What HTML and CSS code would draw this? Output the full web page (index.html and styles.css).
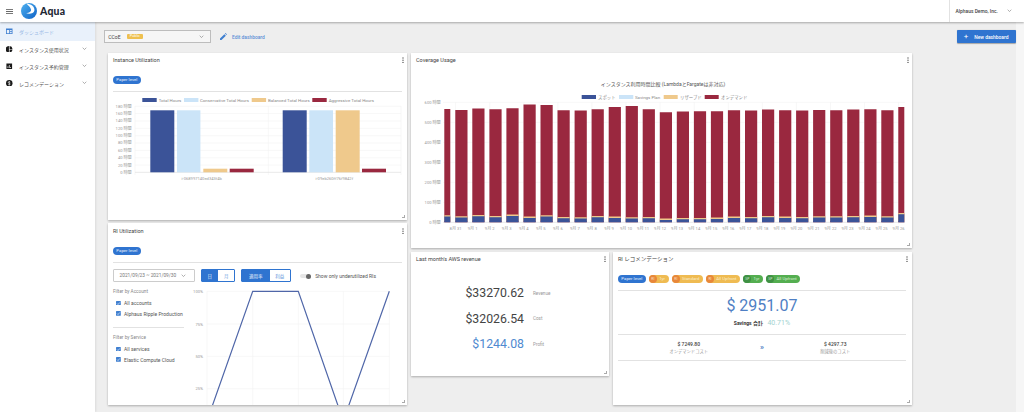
FILE: index.html
```html
<!DOCTYPE html>
<html lang="ja">
<head>
<meta charset="utf-8">
<title>Aqua dashboard</title>
<link rel="stylesheet" href="styles.css">
</head>
<body>
<div class="app">
  <header class="topbar">
    <svg class="burger" viewBox="0 0 7 5"><path d="M0 .4h7M0 2.5h7M0 4.6h7"/></svg>
    <svg class="logo" viewBox="0 0 16 16">
      <defs><linearGradient id="lg" x1="0" y1="0" x2="1" y2="1"><stop offset="0" stop-color="#4fb2f0"/><stop offset="1" stop-color="#0f62c6"/></linearGradient></defs>
      <circle cx="8" cy="8" r="8" fill="url(#lg)"/>
      <path d="M5.5 .6C9.5 1 14 3.5 13.4 7.5 12.9 10.6 8.600 11.200 5.200 10.300 8 9.800 10.500 8.700 10 6.500 9.500 4.200 7 2.500 5.500.6z" fill="#fff"/>
    </svg>
    <span class="brand">Aqua</span>
    <div class="account">
      <span>Alphaus Demo, Inc.</span>
      <svg class="chev" viewBox="0 0 6 4"><path d="M.8.8 3 3 5.200.8"/></svg>
    </div>
  </header>

  <nav class="sidebar">
    <a class="nav-item active">
      <svg class="nav-icon" viewBox="0 0 8 8"><path class="ic-blue" d="M0 .5h8v7H0zM1 2.500v4h3v-4zM5 2.500v1.500h2V2.500zM5 5v1.500h2V5z" fill-rule="evenodd"/></svg>
      <span>ダッシュボード</span>
    </a>
    <a class="nav-item">
      <svg class="nav-icon" viewBox="0 0 8 8"><path class="ic-dark" d="M3.600 0v8A4 4 0 0 1 3.600 0zM4.400 0A4 4 0 0 1 8 3.600H4.400zM4.400 4.400H8A4 4 0 0 1 4.400 8z"/></svg>
      <span>インスタンス使用状況</span>
      <svg class="chev" viewBox="0 0 6 4"><path d="M.8.8 3 3 5.200.8"/></svg>
    </a>
    <a class="nav-item">
      <svg class="nav-icon" viewBox="0 0 8 8"><path class="ic-dark" fill-rule="evenodd" d="M.5.5h7v7h-7zM2 4v2h.8V4zM3.600 2.500V6h.8V2.500zM5.200 5v1H6V5z"/></svg>
      <span>インスタンス予約管理</span>
      <svg class="chev" viewBox="0 0 6 4"><path d="M.8.8 3 3 5.200.8"/></svg>
    </a>
    <a class="nav-item">
      <svg class="nav-icon" viewBox="0 0 8 8"><circle class="ic-dark" cx="4" cy="4" r="4"/><path class="ic-line" d="M5.300 2.700C5 1.900 2.800 1.800 2.800 3c0 1.300 2.500.7 2.500 2 0 1.200-2.300 1.100-2.600.3M4 1.300v5.400"/></svg>
      <span>レコメンデーション</span>
      <svg class="chev" viewBox="0 0 6 4"><path d="M.8.8 3 3 5.200.8"/></svg>
    </a>
  </nav>

  <main class="main">
    <div class="toolbar">
      <div class="picker">
        <span>CCoE</span>
        <span class="tag">Public</span>
        <svg class="chev" viewBox="0 0 6 4"><path d="M.8.8 3 3 5.200.8"/></svg>
      </div>
      <svg class="pencil" viewBox="0 0 8 8"><path d="M0 8V6.300L5 1.300 6.700 3 1.700 8zM5.600.7 6.300 0 8 1.700 7.300 2.400z"/></svg>
      <a class="edit-link">Edit dashboard</a>
      <button class="new-btn"><span class="plus">+</span><span>New dashboard</span></button>
    </div>

    <div class="board">
      <div class="col-left">
        <section class="card card-iu">
          <div class="card-head"><h2>Instance Utilization</h2><svg class="kebab" viewBox="0 0 2 7"><circle cx="1" cy="1" r=".8"/><circle cx="1" cy="3.500" r=".8"/><circle cx="1" cy="6" r=".8"/></svg></div>
          <div class="chips"><span class="chip">Paper level</span></div>
          <hr class="rule">
          <svg class="iu-chart" viewBox="113 92 290 128">
            <g class="grid">
              <path d="M135 106.200H401M135 113.600H401M135 121H401M135 128.300H401M135 135.700H401M135 143H401M135 150.400H401M135 157.800H401M135 165.100H401M135 106V175M268.300 106V175M401 106V175"/>
            </g>
            <path class="axis" d="M135 172.300H401"/>
            <g class="c-blue"><rect x="142.300" y="98" width="14.400" height="4"/><rect x="150.300" y="110.300" width="24" height="62"/><rect x="282.700" y="110.300" width="24" height="62"/></g>
            <g class="c-sky"><rect x="184" y="98" width="14.400" height="4"/><rect x="177" y="110.300" width="23.400" height="62"/><rect x="309.300" y="110.300" width="23.700" height="62"/></g>
            <g class="c-tan"><rect x="251.700" y="98" width="14.400" height="4"/><rect x="203.300" y="168.700" width="24" height="3.600"/><rect x="335.700" y="110.300" width="24" height="62"/></g>
            <g class="c-red"><rect x="312.300" y="98" width="14.400" height="4"/><rect x="229.700" y="168.700" width="24" height="3.600"/><rect x="362" y="168.700" width="24" height="3.600"/></g>
            <g class="t-legend">
              <text x="158.700" y="101.600">Total Hours</text>
              <text x="200" y="101.600">Conservative Total Hours</text>
              <text x="268" y="101.600">Balanced Total Hours</text>
              <text x="328.700" y="101.600">Aggressive Total Hours</text>
            </g>
            <g class="t-axis end">
              <text x="131.700" y="107.600">180 時間</text><text x="131.700" y="115">160 時間</text><text x="131.700" y="122.400">140 時間</text><text x="131.700" y="129.700">120 時間</text><text x="131.700" y="137.100">100 時間</text><text x="131.700" y="144.400">80 時間</text><text x="131.700" y="151.800">60 時間</text><text x="131.700" y="159.200">40 時間</text><text x="131.700" y="166.500">20 時間</text><text x="131.700" y="173.900">0 時間</text>
            </g>
            <g class="t-axis mid">
              <text x="201.700" y="180.300">i-068997140ed343f4b</text>
              <text x="334.300" y="180.300">i-09eb260ff76f9842f</text>
            </g>
          </svg>
        </section>

        <section class="card card-ru">
          <div class="card-head"><h2>RI Utilization</h2><svg class="kebab" viewBox="0 0 2 7"><circle cx="1" cy="1" r=".8"/><circle cx="1" cy="3.500" r=".8"/><circle cx="1" cy="6" r=".8"/></svg></div>
          <div class="chips"><span class="chip">Paper level</span></div>
          <hr class="rule">
          <div class="controls">
            <div class="date"><span>2021/09/23 ~ 2021/09/30</span><svg class="chev" viewBox="0 0 6 4"><path d="M.8.8 3 3 5.200.8"/></svg></div>
            <div class="seg seg-a"><span class="on">日</span><span>月</span></div>
            <div class="seg seg-b"><span class="on">適用率</span><span>利益</span></div>
            <div class="switch"><span class="knob"></span></div>
            <span class="switch-label">Show only underutilized RIs</span>
          </div>
          <div class="ru-body">
            <div class="filters">
              <div class="filter-title">Filter by Account</div>
              <ul class="checks">
                <li><svg class="box" viewBox="0 0 10 10"><rect width="10" height="10" rx="1.200"/><path d="M2 5.200 4.200 7.400 8 3"/></svg>All accounts</li>
                <li><svg class="box" viewBox="0 0 10 10"><rect width="10" height="10" rx="1.200"/><path d="M2 5.200 4.200 7.400 8 3"/></svg>Alphaus Ripple Production</li>
              </ul>
              <hr class="rule short">
              <div class="filter-title">Filter by Service</div>
              <ul class="checks">
                <li><svg class="box" viewBox="0 0 10 10"><rect width="10" height="10" rx="1.200"/><path d="M2 5.200 4.200 7.400 8 3"/></svg>All services</li>
                <li><svg class="box" viewBox="0 0 10 10"><rect width="10" height="10" rx="1.200"/><path d="M2 5.200 4.200 7.400 8 3"/></svg>Elastic Compute Cloud</li>
              </ul>
            </div>
            <svg class="ru-chart" viewBox="190 285 213 120">
              <path class="grid-line" d="M207 290.300H389.300M207 323H389.300M207 355.300H389.300M207 387.700H389.300M207 290.300V405M252.700 290.300V405M298.300 290.300V405M343.300 290.300V405M389.300 290.300V405"/>
              <path class="util-line" d="M207 419.900 252.700 290.300H298.300L343.300 419.900 389.300 290.300"/>
              <g class="t-axis end">
                <text x="203" y="292">100%</text><text x="203" y="324.700">75%</text><text x="203" y="357">50%</text><text x="203" y="389.400">25%</text>
              </g>
            </svg>
          </div>
        </section>
      </div>

      <div class="col-right">
        <section class="card card-cov">
          <div class="card-head"><h2>Coverage Usage</h2><svg class="kebab" viewBox="0 0 2 7"><circle cx="1" cy="1" r=".8"/><circle cx="1" cy="3.500" r=".8"/><circle cx="1" cy="6" r=".8"/></svg></div>
          <svg class="cov-chart" viewBox="416 67 491 181">
            <defs>
              <path id="cov-low" d="M444.300 222.300v-5.700h6v5.700zM455.300 222.300v-4.700h12.200v4.700zM472.300 222.300v-6h12.200v6zM489.400 222.300v-5h12.200v5zM506.400 222.300v-6.300h12.200v6.300zM523.500 222.300v-4.300h12.200v4.300zM540.500 222.300v-5.700h12.200v5.700zM557.500 222.300v-4h12.200v4zM574.600 222.300v-3.700h12.200v3.700zM591.600 222.300v-5h12.200v5zM608.700 222.300v-4.300h12.200v4.300zM625.700 222.300v-3.700h12.200v3.700zM642.700 222.300v-4h12.200v4zM659.800 222.300v-2.300h12.200v2.300zM676.800 222.300v-3h12.200v3zM693.900 222.300v-3h12.200v3zM710.900 222.300v-3.300h12.200v3.300zM727.900 222.300v-4.300h12.200v4.300zM745 222.300v-4h12.200v4zM762 222.300v-5h12.200v5zM779.100 222.300v-4.300h12.200v4.300zM796.100 222.300v-4h12.200v4zM813.100 222.300v-4.700h12.200v4.700zM830.200 222.300v-4.700h12.200v4.700zM847.200 222.300v-5h12.200v5zM864.300 222.300v-5.300h12.200v5.300zM881.300 222.300v-4.700h12.200v4.700zM898.300 222.300v-8h6v8z"/>
            </defs>
            <path class="grid-line" d="M443 102.300H905M443 122.300H905M443 142.300H905M443 162.300H905M443 182.300H905M443 202.300H905M455.600 102.300V224M489.700 102.300V224M523.800 102.300V224M557.900 102.300V224M591.900 102.300V224M626 102.300V224M660.100 102.300V224M694.200 102.300V224M728.300 102.300V224M762.300 102.300V224M796.400 102.300V224M830.500 102.300V224M864.600 102.300V224M898.600 102.300V224"/>
            <path class="axis" d="M443 222.300H905"/>
            <path class="c-red" d="M444.300 222.300v-113.300h6v113.300zM455.300 222.300v-112.300h12.200v112.300zM472.300 222.300v-113.700h12.200v113.700zM489.400 222.300v-113h12.200v113zM506.400 222.300v-114h12.200v114zM523.500 222.300v-117.700h12.200v117.700zM540.500 222.300v-117.300h12.200v117.300zM557.500 222.300v-112h12.200v112zM574.600 222.300v-111.700h12.200v111.700zM591.600 222.300v-113h12.200v113zM608.700 222.300v-115.300h12.200v115.300zM625.700 222.300v-116.300h12.200v116.300zM642.700 222.300v-113h12.200v113zM659.800 222.300v-110h12.200v110zM676.800 222.300v-110.700h12.200v110.700zM693.900 222.300v-111h12.200v111zM710.900 222.300v-111h12.200v111zM727.900 222.300v-112h12.200v112zM745 222.300v-111.700h12.200v111.700zM762 222.300v-112.700h12.200v112.700zM779.100 222.300v-112h12.200v112zM796.100 222.300v-111.700h12.200v111.700zM813.100 222.300v-112.300h12.200v112.300zM830.200 222.300v-112h12.200v112zM847.200 222.300v-112.700h12.200v112.700zM864.300 222.300v-113h12.200v113zM881.300 222.300v-112h12.200v112zM898.300 222.300v-115.300h6v115.300z"/>
            <use href="#cov-low" class="c-tan" transform="translate(0 -1.400)"/>
            <use href="#cov-low" class="c-blue"/>
            <text class="cov-title" x="663" y="85.800">インスタンス利用時間比較 (LambdaとFargateは非対応)</text>
            <rect class="c-blue" x="581.700" y="95" width="14.300" height="4"/>
            <rect class="c-sky" x="619" y="95" width="14.300" height="4"/>
            <rect class="c-tan" x="663.700" y="95" width="14" height="4"/>
            <rect class="c-red" x="704.700" y="95" width="14" height="4"/>
            <g class="t-legend">
              <text x="598" y="98.700">スポット</text>
              <text x="635" y="98.700">Savings Plan</text>
              <text x="680" y="98.700">リザーブド</text>
              <text x="721" y="98.700">オンデマンド</text>
            </g>
            <g class="t-axis end">
              <text x="440.700" y="104">600 時間</text><text x="440.700" y="124">500 時間</text><text x="440.700" y="144">400 時間</text><text x="440.700" y="164">300 時間</text><text x="440.700" y="184">200 時間</text><text x="440.700" y="204">100 時間</text><text x="440.700" y="224">0 時間</text>
            </g>
            <g class="t-axis mid">
              <text x="455.600" y="230">8月 31</text><text x="472.600" y="230">9月 1</text><text x="489.700" y="230">9月 2</text><text x="506.700" y="230">9月 3</text><text x="523.800" y="230">9月 4</text><text x="540.800" y="230">9月 5</text><text x="557.900" y="230">9月 6</text><text x="574.900" y="230">9月 7</text><text x="591.900" y="230">9月 8</text><text x="609" y="230">9月 9</text><text x="626" y="230">9月 10</text><text x="643.100" y="230">9月 11</text><text x="660.100" y="230">9月 12</text><text x="677.100" y="230">9月 13</text><text x="694.200" y="230">9月 14</text><text x="711.200" y="230">9月 15</text><text x="728.300" y="230">9月 16</text><text x="745.300" y="230">9月 17</text><text x="762.300" y="230">9月 18</text><text x="779.400" y="230">9月 19</text><text x="796.400" y="230">9月 20</text><text x="813.500" y="230">9月 21</text><text x="830.500" y="230">9月 22</text><text x="847.500" y="230">9月 23</text><text x="864.600" y="230">9月 24</text><text x="881.600" y="230">9月 25</text><text x="898.600" y="230">9月 26</text>
            </g>
          </svg>
        </section>

        <div class="row-bottom">
          <section class="card card-rev">
            <div class="card-head"><h2>Last month's AWS revenue</h2><svg class="kebab" viewBox="0 0 2 7"><circle cx="1" cy="1" r=".8"/><circle cx="1" cy="3.500" r=".8"/><circle cx="1" cy="6" r=".8"/></svg></div>
            <div class="rev-grid">
              <span class="rev-val">$33270.62</span><span class="rev-lab">Revenue</span>
              <span class="rev-val">$32026.54</span><span class="rev-lab">Cost</span>
              <span class="rev-val profit">$1244.08</span><span class="rev-lab">Profit</span>
            </div>
          </section>

          <section class="card card-rec">
            <div class="card-head"><h2>RI レコメンデーション</h2><svg class="kebab" viewBox="0 0 2 7"><circle cx="1" cy="1" r=".8"/><circle cx="1" cy="3.500" r=".8"/><circle cx="1" cy="6" r=".8"/></svg></div>
            <div class="chips">
              <span class="chip">Paper level</span>
              <span class="chip amber"><i>RI</i>1yr</span>
              <span class="chip amber"><i>RI</i>Standard</span>
              <span class="chip amber"><i>RI</i>All Upfront</span>
              <span class="chip green"><i>SP</i>1yr</span>
              <span class="chip green"><i>SP</i>All Upfront</span>
            </div>
            <hr class="rule">
            <div class="big-save">$ 2951.07</div>
            <div class="save-row"><b>Savings 合計</b><span>40.71%</span></div>
            <hr class="rule">
            <div class="cost-row">
              <div class="cost"><b>$ 7249.80</b><span>オンデマンドコスト</span></div>
              <div class="arrow">»</div>
              <div class="cost"><b>$ 4297.73</b><span>削減後のコスト</span></div>
            </div>
            <hr class="rule">
          </section>
        </div>
      </div>
    </div>
  </main>
</div>
</body>
</html>
```

FILE: styles.css
```css
* { box-sizing: border-box; }
html, body { margin: 0; height: 100%; overflow: hidden; }
body { font-family: Roboto, "Noto Sans CJK JP", sans-serif; color: #333; font-size: 5.4px; }

.app { display: grid; grid-template-columns: 95px 1fr; grid-template-rows: 22px 1fr; height: 412px; }

/* top bar */
.topbar { grid-column: 1 / 3; display: flex; align-items: center; background: #fff; box-shadow: 0 1px 2px rgba(0,0,0,.3); position: relative; z-index: 2; padding-left: 6px; }
.burger { width: 7px; height: 5px; fill: none; stroke: #444; stroke-width: .8; margin-right: 8px; }
.logo { width: 16px; height: 16px; margin-right: 3px; }
.brand { font-family: Lato, Roboto, sans-serif; font-weight: 900; font-size: 10.4px; letter-spacing: .25px; color: #1d2733; }
.account { margin-left: auto; height: 100%; width: 74.700px; border-left: 1px solid #e2e2e2; display: flex; align-items: center; padding-left: 5.300px; font-size: 4.900px; font-weight: 500; color: #444; }
.account .chev { margin-left: 9.500px; }
.chev { width: 5px; height: 3.400px; fill: none; stroke: #777; stroke-width: .7; flex: none; }

/* side navigation */
.sidebar { background: #fff; box-shadow: 1px 0 2px rgba(0,0,0,.08); position: relative; z-index: 1; display: flex; flex-direction: column; }
.nav-item { height: 17px; display: flex; align-items: center; padding: 0 8px 0 6px; font-size: 5px; color: #555; }
.nav-item.active { height: 19px; background: #e9f1fb; color: #9bbbe6; }
.nav-item:nth-child(2) { margin-top: -.5px; }
.nav-icon { width: 6.500px; height: 6.500px; margin-right: 6.500px; flex: none; }
.nav-item .chev { margin-left: auto; }
.ic-blue { fill: #3f7fd0; }
.ic-dark { fill: #1a1a1a; }
.ic-line { fill: none; stroke: #fff; stroke-width: .7; }

/* main */
.main { background: linear-gradient(to right, #eee 921px, #f6f6f6 921px); padding: 8.700px 8px 0 9.300px; min-width: 0; }
.toolbar { display: flex; align-items: center; height: 13px; margin-top: -.500px; }
.picker { width: 106.400px; height: 12.600px; border: 1px solid #bdbdbd; background: #f6f6f6; display: flex; align-items: center; padding: 0 6px 0 3px; font-size: 5px; color: #444; }
.picker .chev { margin-left: auto; }
.tag { margin-left: 6px; width: 16.500px; height: 5.500px; background: #eec04f; color: #fff; border-radius: 1px; font-size: 3.600px; line-height: 5.500px; text-align: center; }
.pencil { width: 7px; height: 7px; fill: #3f7fd0; margin-left: 9.300px; }
.edit-link { margin-left: 5px; font-size: 4.900px; font-weight: 500; color: #5d8fd6; }
.new-btn { margin-left: auto; width: 59.300px; height: 13.300px; background: #2f74d0; color: #fff; border: 0; border-radius: 1px; display: flex; align-items: center; padding: 0 0 0 7px; font: 500 4.900px Roboto, sans-serif; box-shadow: 0 .5px 1px rgba(0,0,0,.3); }
.plus { font-size: 8px; line-height: 8px; font-weight: 400; margin-right: 6px; }

/* board */
.board { display: flex; gap: 4px; margin: 9.800px 0 0 3.700px; }
.col-left { width: 299px; display: flex; flex-direction: column; gap: 3px; }
.col-right { width: 501px; display: flex; flex-direction: column; gap: 4px; }
.row-bottom { display: flex; gap: 4px; align-items: flex-start; }

.card { background: #fff; box-shadow: 0 .5px 2px rgba(0,0,0,.28); padding: 0 5px; position: relative; overflow: hidden; }
.card::after { content: ""; position: absolute; right: 2px; bottom: 2px; width: 2px; height: 2px; border-right: .5px solid #aaa; border-bottom: .5px solid #aaa; }
.card-iu { height: 167px; }
.card-ru { height: 182px; padding-top: 1px; }
.card-cov { height: 195px; }
.card-rev { width: 198px; height: 124px; }
.card-rec { width: 299px; height: 153px; padding-right: 6px; }

.card-head { height: 14px; display: flex; align-items: center; justify-content: space-between; }
h2 { margin: 0; font-size: 5.500px; font-weight: 400; color: #444; }
.kebab { width: 2px; height: 6.500px; fill: #666; margin-right: -1.700px; }

.chips { display: flex; gap: 3px; margin-top: 8.700px; height: 8.400px; }
.chip { height: 8.400px; width: 27.700px; border-radius: 4.200px; background: #2f74d0; color: #e8f0fb; font-size: 4.300px; line-height: 8.400px; text-align: center; white-space: nowrap; }
.chip i { float: left; width: 8.400px; height: 8.400px; border-radius: 50%; font-style: normal; font-size: 3.400px; text-align: center; color: #f8e0c0; margin-right: 2px; }
.chip.amber { background: #efbb52; color: #fbeecd; width: auto; padding-right: 3.500px; min-width: 20px; }
.chip.amber i { background: #e8873a; }
.chip.green { background: #54ae50; color: #d8efd6; width: auto; padding-right: 3.500px; min-width: 20px; }
.chip.green i { background: #3f9044; color: #cfe8ce; }

.rule { border: 0; border-top: .7px solid #e2e2e2; margin: 7.300px 0 0; }
.rule.short { width: 71px; margin: 8.400px 0 6.600px; }

/* SVG charts */
.iu-chart { display: block; width: 290px; height: 128px; }
.cov-chart { display: block; width: 491px; height: 181px; }
.ru-chart { display: block; width: 213px; height: 120px; flex: none; }
.c-blue { fill: #3b5398; }
.c-sky { fill: #cbe4f8; }
.c-tan { fill: #efc98c; }
.c-red { fill: #9a283f; }
.grid path, .grid-line { fill: none; stroke: #f1f1f1; stroke-width: .6; }
.axis { fill: none; stroke: #d8d8d8; stroke-width: .6; }
.util-line { fill: none; stroke: #4f66a8; stroke-width: 1.200; }
.t-legend text { font-size: 4.400px; fill: #888; }
.t-axis text { font-size: 4.100px; fill: #999; }
.t-axis.end text { text-anchor: end; }
.t-axis.mid text { text-anchor: middle; }
.cov-title { font-size: 5px; fill: #555; text-anchor: middle; }

/* RI utilization */
.controls { display: flex; align-items: center; height: 13px; margin-top: 6.100px; }
.date { width: 81.700px; height: 13px; border: .7px solid #ccc; border-radius: 1px; display: flex; align-items: center; padding: 0 8px 0 5.500px; font-size: 4.800px; color: #777; }
.date .chev { margin-left: auto; }
.seg { display: flex; height: 13px; border: .7px solid #2f74d0; border-radius: 1px; font-size: 4.500px; color: #6d9ddd; }
.seg span { display: flex; align-items: center; justify-content: center; }
.seg .on { background: #2f74d0; color: #e8f0fb; }
.seg-a { width: 34.700px; margin-left: 6px; }
.seg-a span { flex: 1; }
.seg-b { width: 49.700px; margin-left: 5.600px; }
.seg-b .on { width: 27.700px; }
.seg-b span:last-child { flex: 1; }
.switch { position: relative; width: 11px; height: 3.500px; margin-left: 9px; border-radius: 2px; background: #e6e6e6; }
.knob { position: absolute; right: -.5px; top: -.7px; width: 5px; height: 5px; border-radius: 50%; background: #666; }
.switch-label { margin-left: 4.500px; font-size: 5px; color: #555; }

.ru-body { display: flex; margin-top: 3.300px; }
.filters { width: 77px; flex: none; padding-top: 3.300px; }
.filter-title { height: 6px; line-height: 6px; font-size: 4.700px; color: #888; }
.checks { list-style: none; margin: 2.700px 0 0; padding: 0 0 0 3.300px; }
.checks li { height: 10.650px; display: flex; align-items: center; font-size: 5px; color: #555; white-space: nowrap; }
.box { width: 4.800px; height: 4.800px; margin-right: 3px; flex: none; }
.box rect { fill: #3f7fd0; }
.box path { fill: none; stroke: #fff; stroke-width: 1.300; }

/* revenue */
.rev-grid { display: grid; grid-template-columns: 108px 1fr; column-gap: 9px; grid-auto-rows: 25.500px; align-items: center; margin-top: 14.500px; }
.rev-val { font-size: 12.300px; text-align: right; color: #444; }
.rev-val.profit { color: #4f8ad0; }
.rev-lab { font-size: 4.600px; color: #999; }

/* recommendation */
.big-save { margin-top: 3.300px; height: 21px; line-height: 21px; text-align: center; font-size: 16px; color: #4f7fc4; }
.save-row { height: 14.600px; display: flex; align-items: center; justify-content: center; gap: 4.500px; font-size: 5px; color: #333; margin-bottom: 3.300px; }
.save-row span { font-size: 7px; color: #a3d2d0; }
.card-rec .save-row + .rule { margin-top: 0; }
.cost-row { height: 25.500px; display: grid; grid-template-columns: 1fr 5px 1fr; align-items: center; }
.cost-row + .rule { margin-top: 0; }
.cost { display: flex; flex-direction: column; align-items: center; gap: 1.500px; font-size: 4.300px; color: #999; }
.cost b { font-size: 5px; font-weight: 500; color: #444; }
.arrow { text-align: center; font-size: 8px; line-height: 8px; color: #4f7fc4; font-weight: 700; }
```
